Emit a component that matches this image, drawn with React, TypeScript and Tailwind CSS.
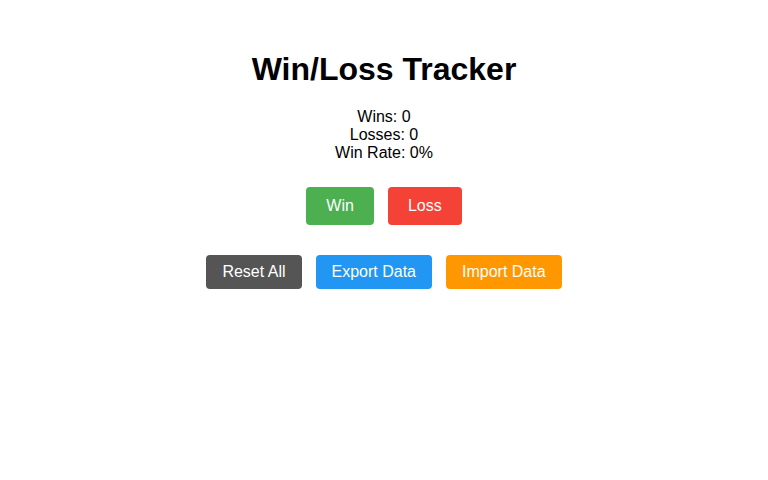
import { useState } from 'react'

export default function App() {
  const [wins, setWins] = useState(0)
  const [losses, setLosses] = useState(0)

  const total = wins + losses
  const rate = total > 0 ? Math.round((wins / total) * 100) : 0

  return (
    <div className="min-h-screen bg-white text-black font-['Liberation_Sans',Arial,sans-serif] flex flex-col items-center pt-[51px]">
      <h1 className="text-[32px] leading-[37px] font-bold">Win/Loss Tracker</h1>

      {/* Stats */}
      <div className="mt-[20px] text-base leading-[18px] text-center">
        <div>Wins: {wins}</div>
        <div>Losses: {losses}</div>
        <div>Win Rate: {rate}%</div>
      </div>

      <div className="mt-[25px] flex gap-[14px]">
        <button
          onClick={() => setWins(w => w + 1)}
          className="bg-[#4caf50] text-white text-base leading-[18px] px-5 py-[10px] rounded"
        >
          Win
        </button>
        <button
          onClick={() => setLosses(l => l + 1)}
          className="bg-[#f44336] text-white text-base leading-[18px] px-5 py-[10px] rounded"
        >
          Loss
        </button>
      </div>

      <div className="mt-[30px] flex gap-[14px]">
        <button
          onClick={() => { setWins(0); setLosses(0) }}
          className="bg-[#555555] text-white text-base leading-[18px] px-4 py-2 rounded"
        >
          Reset All
        </button>
        <button className="bg-[#2196f3] text-white text-base leading-[18px] px-4 py-2 rounded">
          Export Data
        </button>
        <button className="bg-[#ff9800] text-white text-base leading-[18px] px-4 py-2 rounded">
          Import Data
        </button>
      </div>
    </div>
  )
}
